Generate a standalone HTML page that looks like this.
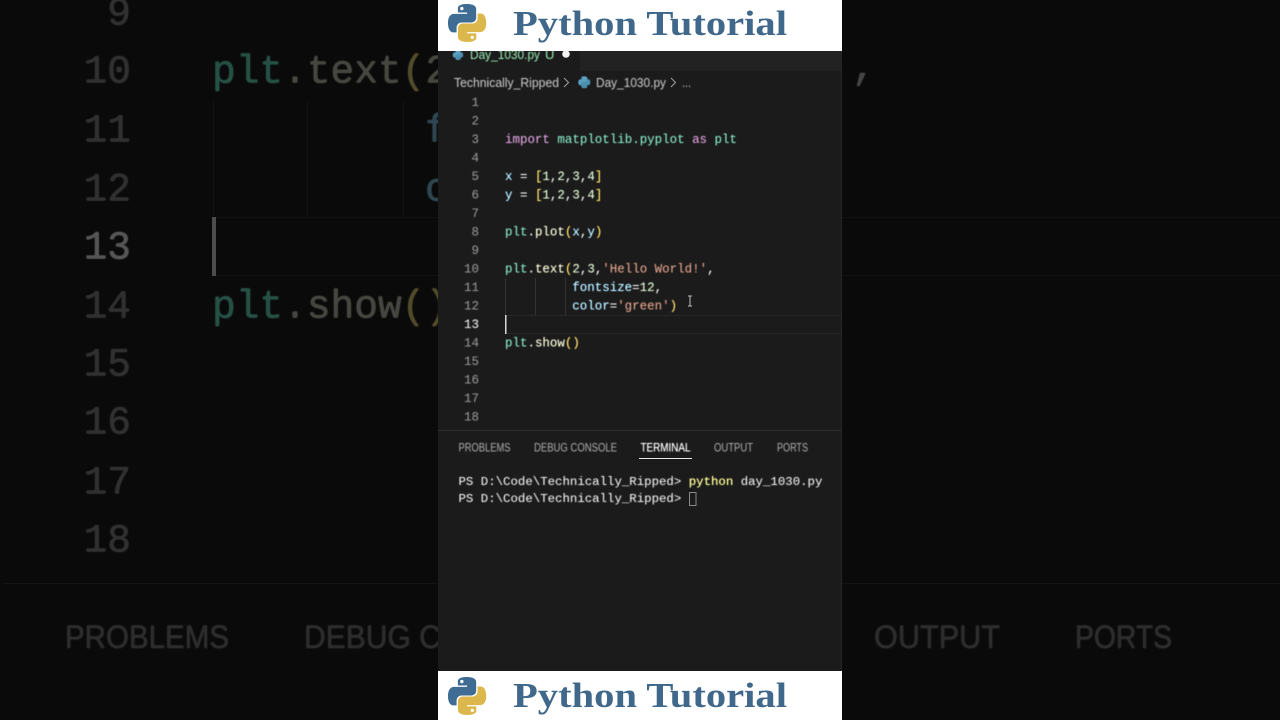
<!DOCTYPE html>
<html lang="en"><head><meta charset="utf-8"><title>Python Tutorial</title>
<style>
html,body{margin:0;padding:0;background:#0a0a0a;width:1280px;height:720px;overflow:hidden}
svg{display:block}
.m{font-family:"Liberation Mono",monospace;white-space:pre}
.s{font-family:"Liberation Sans",sans-serif}
.c{font-size:12.47px}
.n{font-size:12.47px;fill:#7c7c7c;text-anchor:end}
.b{font-size:39.5px}
.bn{font-size:39.5px;fill:#303030;text-anchor:end}
.t{font-family:"Liberation Serif",serif;font-weight:bold;font-size:35px;fill:#40688a}
</style></head><body>
<svg width="1280" height="720" viewBox="0 0 1280 720" xmlns="http://www.w3.org/2000/svg">
<defs>
<filter id="soft" filterUnits="userSpaceOnUse" x="0" y="0" width="1280" height="720" color-interpolation-filters="sRGB">
<feGaussianBlur stdDeviation="0.4"/>
<feComponentTransfer><feFuncA type="linear" slope="1.35"/></feComponentTransfer>
</filter>
<filter id="soft1" filterUnits="userSpaceOnUse" x="0" y="0" width="1280" height="720" color-interpolation-filters="sRGB">
<feGaussianBlur stdDeviation="0.35"/>
</filter>
<filter id="soft2" filterUnits="userSpaceOnUse" x="0" y="0" width="1280" height="720" color-interpolation-filters="sRGB">
<feGaussianBlur stdDeviation="0.9"/>
<feComponentTransfer><feFuncA type="linear" slope="1.5"/></feComponentTransfer>
</filter>
<g id="logo">
<path fill="#3f6c93" fill-rule="evenodd" d="M54.9 0C26.8 0 28.6 12.2 28.6 12.2l0 12.6h26.8v3.8H17.9S0 26.6 0 55s15.6 27.4 15.6 27.4h9.3V69.2s-.5-15.6 15.4-15.6h26.5s14.9.2 14.9-14.4V15S84 0 54.9 0zM40.2 8.5a4.8 4.8 0 1 1 0 9.6 4.8 4.8 0 0 1 0-9.6z"/>
<path fill="#dcb84c" fill-rule="evenodd" d="M55.7 110c28.1 0 26.3-12.2 26.3-12.2l0-12.6H55.2v-3.8h37.5s18 2 18-26.4-15.7-27.4-15.7-27.4h-9.3v13.2s.5 15.6-15.4 15.6H43.8s-14.9-.2-14.9 14.4V95S26.6 110 55.7 110zm14.7-8.5a4.8 4.8 0 1 1 0-9.6 4.8 4.8 0 0 1 0 9.6z"/>
</g>
<g id="fi">
<path fill="#5a9fc0" d="M54.9 0C26.8 0 28.6 12.2 28.6 12.2l0 12.6h26.8v3.8H17.9S0 26.6 0 55s15.6 27.4 15.6 27.4h9.3V69.2s-.5-15.6 15.4-15.6h26.5s14.9.2 14.9-14.4V15S84 0 54.9 0z"/>
<path fill="#4a8fb0" d="M55.7 110c28.1 0 26.3-12.2 26.3-12.2l0-12.6H55.2v-3.8h37.5s18 2 18-26.4-15.7-27.4-15.7-27.4h-9.3v13.2s.5 15.6-15.4 15.6H43.8s-14.9-.2-14.9 14.4V95S26.6 110 55.7 110z"/>
</g>
</defs>

<rect width="1280" height="720" fill="#0a0a0a"/>

<!-- blurred backdrop -->
<rect x="212" y="217" width="1068" height="1" fill="#111111"/>
<rect x="212" y="275" width="1068" height="1" fill="#111111"/>
<rect x="4" y="583" width="1276" height="1" fill="#141414"/>
<rect x="212" y="217" width="4" height="59" fill="#4d4d4d"/>
<rect x="213" y="101" width="1" height="115" fill="#131313"/>
<rect x="307" y="101" width="1" height="115" fill="#131313"/>
<rect x="403" y="101" width="1" height="115" fill="#131313"/>
<g filter="url(#soft2)">
<g class="m">
<text class="bn" x="131" y="24.500">9</text>
<text class="bn" x="131" y="82.500">10</text>
<text class="bn" x="131" y="141.500">11</text>
<text class="bn" x="131" y="200.500">12</text>
<text class="bn" x="131" y="258.500" style="fill:#555555">13</text>
<text class="bn" x="131" y="317.500">14</text>
<text class="bn" x="131" y="375.500">15</text>
<text class="bn" x="131" y="433.500">16</text>
<text class="bn" x="131" y="493.500">17</text>
<text class="bn" x="131" y="551.500">18</text>
<text class="b" x="212" y="82.500"><tspan fill="#265044">plt</tspan><tspan fill="#464640">.text</tspan><tspan fill="#504b2a">(</tspan><tspan fill="#464640">2</tspan></text>
<text class="b" x="212" y="317.500"><tspan fill="#265044">plt</tspan><tspan fill="#464640">.show</tspan><tspan fill="#504b2a">()</tspan></text>
<text class="b" x="425" y="141.500" fill="#2d4650">f</text>
<text class="b" x="425" y="200.500" fill="#2d4650">c</text>
<text class="b" x="852" y="79" fill="#444444">,</text>
</g>
<g class="s" fill="#2c2c2c" font-size="32">
<text x="65" y="648" textLength="164" lengthAdjust="spacingAndGlyphs">PROBLEMS</text>
<text x="304" y="648" textLength="262" lengthAdjust="spacingAndGlyphs">DEBUG CONSOLE</text>
<text x="874" y="648" textLength="126" lengthAdjust="spacingAndGlyphs">OUTPUT</text>
<text x="1075" y="648" textLength="97" lengthAdjust="spacingAndGlyphs">PORTS</text>
</g>
</g>

<!-- centre panel -->
<rect x="438" y="51" width="404" height="620" fill="#1b1b1b"/>
<rect x="580" y="51" width="262" height="20" fill="#222222"/>
<rect x="841" y="51" width="1" height="620" fill="#262626"/>

<g filter="url(#soft)">
<!-- tab -->
<use href="#fi" transform="translate(453 50) scale(.09)"/>
<text class="s" x="470" y="59" font-size="13" fill="#79b98d" textLength="70" lengthAdjust="spacingAndGlyphs">Day_1030.py</text>
<text class="s" x="545" y="59" font-size="13" fill="#79b98d">U</text>

<!-- breadcrumb -->
<g class="s" font-size="13" fill="#a0a0a0">
<text x="454" y="87" textLength="105" lengthAdjust="spacingAndGlyphs">Technically_Ripped</text>
<text x="596" y="87" textLength="70" lengthAdjust="spacingAndGlyphs">Day_1030.py</text>
<text x="682" y="87" textLength="9" lengthAdjust="spacingAndGlyphs">...</text>
</g>
<use href="#fi" transform="translate(578.500 76.500) scale(.105)"/>

<!-- editor text -->
<g class="m">
<text class="n" x="479" y="106">1</text>
<text class="n" x="479" y="124.500">2</text>
<text class="n" x="479" y="143">3</text>
<text class="n" x="479" y="161.500">4</text>
<text class="n" x="479" y="180">5</text>
<text class="n" x="479" y="198.500">6</text>
<text class="n" x="479" y="217">7</text>
<text class="n" x="479" y="235.500">8</text>
<text class="n" x="479" y="254">9</text>
<text class="n" x="479" y="272.500">10</text>
<text class="n" x="479" y="291">11</text>
<text class="n" x="479" y="309.500">12</text>
<text class="n" x="479" y="328" style="fill:#c6c6c6">13</text>
<text class="n" x="479" y="346.500">14</text>
<text class="n" x="479" y="365">15</text>
<text class="n" x="479" y="383.500">16</text>
<text class="n" x="479" y="402">17</text>
<text class="n" x="479" y="420.500">18</text>

<text class="c" x="505" y="143"><tspan fill="#bb8abc">import</tspan><tspan> </tspan><tspan fill="#74c3a8">matplotlib.pyplot</tspan><tspan> </tspan><tspan fill="#bb8abc">as</tspan><tspan> </tspan><tspan fill="#74c3a8">plt</tspan></text>
<text class="c" x="505" y="180"><tspan fill="#a6d6ec">x</tspan><tspan fill="#d0d0d0"> = </tspan><tspan fill="#e0c860">[</tspan><tspan fill="#c2d6b6">1</tspan><tspan fill="#d0d0d0">,</tspan><tspan fill="#c2d6b6">2</tspan><tspan fill="#d0d0d0">,</tspan><tspan fill="#c2d6b6">3</tspan><tspan fill="#d0d0d0">,</tspan><tspan fill="#c2d6b6">4</tspan><tspan fill="#e0c860">]</tspan></text>
<text class="c" x="505" y="198.500"><tspan fill="#a6d6ec">y</tspan><tspan fill="#d0d0d0"> = </tspan><tspan fill="#e0c860">[</tspan><tspan fill="#c2d6b6">1</tspan><tspan fill="#d0d0d0">,</tspan><tspan fill="#c2d6b6">2</tspan><tspan fill="#d0d0d0">,</tspan><tspan fill="#c2d6b6">3</tspan><tspan fill="#d0d0d0">,</tspan><tspan fill="#c2d6b6">4</tspan><tspan fill="#e0c860">]</tspan></text>
<text class="c" x="505" y="235.500"><tspan fill="#74c3a8">plt</tspan><tspan fill="#d0d0d0">.</tspan><tspan fill="#dcdcc0">plot</tspan><tspan fill="#e0c860">(</tspan><tspan fill="#a6d6ec">x</tspan><tspan fill="#d0d0d0">,</tspan><tspan fill="#a6d6ec">y</tspan><tspan fill="#e0c860">)</tspan></text>
<text class="c" x="505" y="272.500"><tspan fill="#74c3a8">plt</tspan><tspan fill="#d0d0d0">.</tspan><tspan fill="#dcdcc0">text</tspan><tspan fill="#e0c860">(</tspan><tspan fill="#c2d6b6">2</tspan><tspan fill="#d0d0d0">,</tspan><tspan fill="#c2d6b6">3</tspan><tspan fill="#d0d0d0">,</tspan><tspan fill="#bd8a78">'Hello World!'</tspan><tspan fill="#d0d0d0">,</tspan></text>
<text class="c" x="572.300" y="291"><tspan fill="#a6d6ec">fontsize</tspan><tspan fill="#d0d0d0">=</tspan><tspan fill="#c2d6b6">12</tspan><tspan fill="#d0d0d0">,</tspan></text>
<text class="c" x="572.300" y="309.500"><tspan fill="#a6d6ec">color</tspan><tspan fill="#d0d0d0">=</tspan><tspan fill="#bd8a78">'green'</tspan><tspan fill="#e0c860">)</tspan></text>
<text class="c" x="505" y="346.500"><tspan fill="#74c3a8">plt</tspan><tspan fill="#d0d0d0">.</tspan><tspan fill="#dcdcc0">show</tspan><tspan fill="#e0c860">()</tspan></text>
</g>

<!-- panel text -->
<g class="s" font-size="11.500" fill="#8a8a8a">
<text x="458.500" y="451.500" textLength="52" lengthAdjust="spacingAndGlyphs">PROBLEMS</text>
<text x="534" y="451.500" textLength="83" lengthAdjust="spacingAndGlyphs">DEBUG CONSOLE</text>
<text x="640.500" y="451.500" textLength="50" lengthAdjust="spacingAndGlyphs" fill="#e2e2e2">TERMINAL</text>
<text x="714" y="451.500" textLength="39" lengthAdjust="spacingAndGlyphs">OUTPUT</text>
<text x="777" y="451.500" textLength="31" lengthAdjust="spacingAndGlyphs">PORTS</text>
</g>
<g class="m" font-size="12.380" fill="#c8c8c8">
<text x="458.500" y="485">PS D:\Code\Technically_Ripped&gt; <tspan fill="#e6e68a">python</tspan> day_1030.py</text>
<text x="458.500" y="502">PS D:\Code\Technically_Ripped&gt;</text>
</g>
</g>

<circle cx="566" cy="54" r="3.8" fill="#f2f2f2"/>
<path d="M564 78l4.500 4.500-4.500 4.500M671 78l4.500 4.500-4.500 4.500" fill="none" stroke="#9c9c9c" stroke-width="1.100"/>
<rect x="505" y="278" width="1" height="37" fill="#333333"/>
<rect x="535" y="278" width="1" height="37" fill="#333333"/>
<rect x="565" y="278" width="1" height="37" fill="#333333"/>
<rect x="506" y="315" width="335" height="1" fill="#272727"/>
<rect x="506" y="333" width="335" height="1" fill="#272727"/>
<rect x="505" y="315" width="1.500" height="19" fill="#d8d8d8"/>
<path d="M688 296h4M688 306h4M690 296v10" fill="none" stroke="#bdbdbd" stroke-width="1"/>
<rect x="438" y="430" width="404" height="1" fill="#2d2d2d"/>
<rect x="639" y="458" width="53" height="1" fill="#e6e6e6"/>
<rect x="689.500" y="492.500" width="6.500" height="13" fill="none" stroke="#8a8a8a" stroke-width="1"/>

<!-- banners -->
<rect x="438" y="0" width="404" height="51" fill="#ffffff"/>
<rect x="438" y="671" width="404" height="49" fill="#ffffff"/>
<use href="#logo" transform="translate(448 4) scale(.345)"/>
<use href="#logo" transform="translate(448 677) scale(.345)"/>
<g filter="url(#soft1)">
<text class="t" x="513" y="35" textLength="274" lengthAdjust="spacingAndGlyphs">Python Tutorial</text>
<text class="t" x="513" y="707" textLength="274" lengthAdjust="spacingAndGlyphs">Python Tutorial</text>
</g>
</svg>
</body></html>
